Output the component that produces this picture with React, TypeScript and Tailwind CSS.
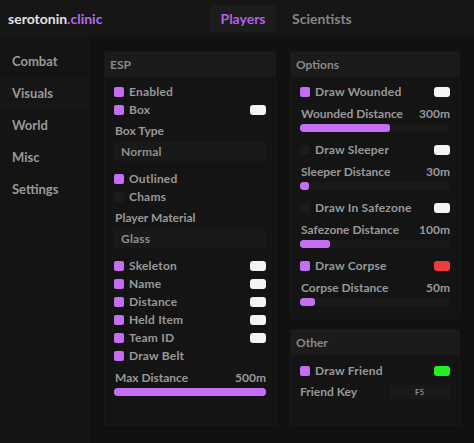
import React from "react";

const font = { fontFamily: "Lato, 'Open Sans', sans-serif" };

function Check({ on }: { on: boolean }) {
  return (
    <div
      className={
        "w-[10px] h-[10px] rounded-[2px] shrink-0 " +
        (on ? "bg-[#c46df5]" : "bg-[#1b1b1b]")
      }
    />
  );
}

function Swatch({ color }: { color: string }) {
  return <div className="w-[16px] h-[10px] rounded-[3px]" style={{ background: color }} />;
}

function CheckRow({ label, on, color, mt = "" }: { label: string; on: boolean; color?: string; mt?: string }) {
  return (
    <div className={"h-[18px] flex items-center " + mt}>
      <Check on={on} />
      <span className="ml-[5px] text-[12px] font-bold text-[#989898] leading-none tracking-[0.2px]">{label}</span>
      <div className="flex-1" />
      {color && <Swatch color={color} />}
    </div>
  );
}

function Label({ text, value, mt = "" }: { text: string; value?: string; mt?: string }) {
  return (
    <div className={"h-[18px] flex items-center justify-between pl-[1px] " + mt}>
      <span className="text-[12px] font-bold text-[#989898] leading-none">{text}</span>
      {value && <span className="text-[12px] font-bold text-[#989898] leading-none">{value}</span>}
    </div>
  );
}

function Slider({ pct }: { pct: number }) {
  return (
    <div className="mt-[1px] h-[8px] rounded-[3px] bg-[#191919] overflow-hidden">
      <div className="h-full rounded-[3px] bg-[#c46df5]" style={{ width: pct + "%" }} />
    </div>
  );
}

function Dropdown({ text }: { text: string }) {
  return (
    <div className="mt-[2px] h-[19px] bg-[#191919] flex items-center pl-[7px]">
      <span className="text-[12px] font-bold text-[#8e8e8e] leading-none tracking-[0.2px]">{text}</span>
    </div>
  );
}

function PanelHeader({ title }: { title: string }) {
  return (
    <div className="h-[25px] bg-[#1b1b1b] flex items-center pl-[5px]">
      <span className="text-[12px] font-bold text-[#8a8a8a] leading-none">{title}</span>
    </div>
  );
}

export default function App() {
  const side = ["Combat", "Visuals", "World", "Misc", "Settings"];
  return (
    <div style={font} className="w-[474px] h-[443px] bg-[#111111] flex flex-col overflow-hidden">
      <div className="h-[37px] bg-[#161616] flex items-center shrink-0">
        <div className="pl-[8px] w-[210px] text-[14px] font-bold leading-none">
          <span className="text-[#e2e2e2]">serotonin</span>
          <span className="text-[#b46ae6]">.clinic</span>
        </div>
        <div className="h-[27px] w-[66px] bg-[#1c1c1c] rounded-[2px] flex items-center justify-center">
          <span className="text-[14px] font-bold text-[#ae62e6] leading-none">Players</span>
        </div>
        <div className="ml-[16px] text-[14px] font-bold text-[#858585] leading-none">Scientists</div>
      </div>
      <div className="flex flex-1">
        <div className="w-[90px] bg-[#141414] pt-[8px] flex flex-col">
          {side.map((s) => (
            <div
              key={s}
              className={
                "h-[32px] flex items-center pl-[12px] mr-[2px] " +
                (s === "Visuals" ? "bg-[#161616]" : "")
              }
            >
              <span className="text-[13px] font-bold text-[#999999] leading-none">{s}</span>
            </div>
          ))}
        </div>
        <div className="flex pl-[14px] pt-[14px] gap-[14px] items-start">
          <div className="w-[172px] h-[375px] bg-[#141414] border border-[#181818] flex flex-col">
            <PanelHeader title="ESP" />
            <div className="px-[9px] pt-[6px] flex flex-col">
              <CheckRow label="Enabled" on />
              <CheckRow label="Box" on color="#f4f4f4" />
              <Label text="Box Type" mt="mt-[3px]" />
              <Dropdown text="Normal" />
              <CheckRow label="Outlined" on mt="mt-[9px]" />
              <CheckRow label="Chams" on={false} />
              <Label text="Player Material" mt="mt-[3px]" />
              <Dropdown text="Glass" />
              <CheckRow label="Skeleton" on color="#f4f4f4" mt="mt-[9px]" />
              <CheckRow label="Name" on color="#f4f4f4" />
              <CheckRow label="Distance" on color="#f4f4f4" />
              <CheckRow label="Held Item" on color="#f4f4f4" />
              <CheckRow label="Team ID" on color="#f4f4f4" />
              <CheckRow label="Draw Belt" on />
              <Label text="Max Distance" value="500m" mt="mt-[4px]" />
              <Slider pct={100} />
            </div>
          </div>
          <div className="w-[170px] flex flex-col gap-[10px]">
            <div className="h-[268px] bg-[#141414] border border-[#181818] flex flex-col">
              <PanelHeader title="Options" />
              <div className="px-[9px] pt-[6px] flex flex-col">
                <CheckRow label="Draw Wounded" on color="#f4f4f4" />
                <Label text="Wounded Distance" value="300m" mt="mt-[4px]" />
                <Slider pct={60} />
                <CheckRow label="Draw Sleeper" on={false} color="#f4f4f4" mt="mt-[9px]" />
                <Label text="Sleeper Distance" value="30m" mt="mt-[4px]" />
                <Slider pct={6} />
                <CheckRow label="Draw In Safezone" on={false} color="#f4f4f4" mt="mt-[9px]" />
                <Label text="Safezone Distance" value="100m" mt="mt-[4px]" />
                <Slider pct={20} />
                <CheckRow label="Draw Corpse" on color="#ef3b3b" mt="mt-[9px]" />
                <Label text="Corpse Distance" value="50m" mt="mt-[4px]" />
                <Slider pct={10} />
              </div>
            </div>
            <div className="h-[97px] bg-[#141414] border border-[#181818] flex flex-col">
              <PanelHeader title="Other" />
              <div className="px-[9px] pt-[7px] flex flex-col">
                <CheckRow label="Draw Friend" on color="#22f022" />
                <div className="h-[18px] mt-[3px] flex items-center justify-between">
                  <span className="text-[12px] font-bold text-[#989898] leading-none">Friend Key</span>
                  <div className="w-[61px] h-[14px] bg-[#191919] flex items-center justify-center">
                    <span className="text-[8px] font-bold text-[#8a8a8a] leading-none">F5</span>
                  </div>
                </div>
              </div>
            </div>
          </div>
        </div>
      </div>
    </div>
  );
}
